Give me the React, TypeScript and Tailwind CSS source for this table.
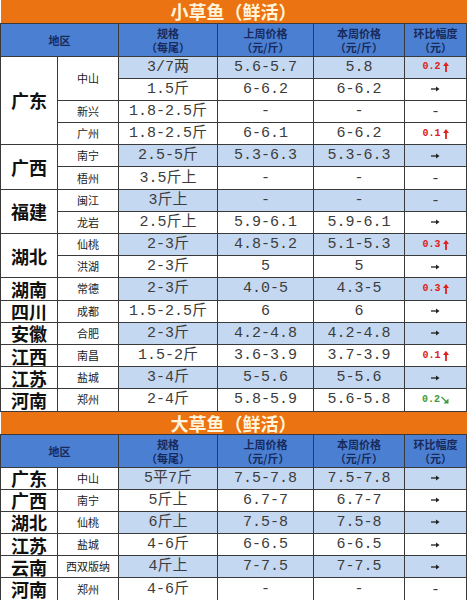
import React from 'react';

type Change = { kind: 'up' | 'down' | 'flat' | 'none'; v?: string };

type Row = {
  prov?: { name: string; span: number };
  city?: { name: string; span: number };
  spec: string;
  last: string;
  cur: string;
  chg: Change;
  blue: boolean;
};

const up = (v: string): Change => ({ kind: 'up', v });
const flat: Change = { kind: 'flat' };
const none: Change = { kind: 'none' };

const smallFish: Row[] = [
  { prov: { name: '广东', span: 4 }, city: { name: '中山', span: 2 }, spec: '3/7两', last: '5.6-5.7', cur: '5.8', chg: up('0.2'), blue: true },
  { spec: '1.5斤', last: '6-6.2', cur: '6-6.2', chg: flat, blue: false },
  { city: { name: '新兴', span: 1 }, spec: '1.8-2.5斤', last: '-', cur: '-', chg: none, blue: false },
  { city: { name: '广州', span: 1 }, spec: '1.8-2.5斤', last: '6-6.1', cur: '6-6.2', chg: up('0.1'), blue: false },
  { prov: { name: '广西', span: 2 }, city: { name: '南宁', span: 1 }, spec: '2.5-5斤', last: '5.3-6.3', cur: '5.3-6.3', chg: flat, blue: true },
  { city: { name: '梧州', span: 1 }, spec: '3.5斤上', last: '-', cur: '-', chg: none, blue: false },
  { prov: { name: '福建', span: 2 }, city: { name: '闽江', span: 1 }, spec: '3斤上', last: '-', cur: '-', chg: none, blue: true },
  { city: { name: '龙岩', span: 1 }, spec: '2.5斤上', last: '5.9-6.1', cur: '5.9-6.1', chg: flat, blue: false },
  { prov: { name: '湖北', span: 2 }, city: { name: '仙桃', span: 1 }, spec: '2-3斤', last: '4.8-5.2', cur: '5.1-5.3', chg: up('0.3'), blue: true },
  { city: { name: '洪湖', span: 1 }, spec: '2-3斤', last: '5', cur: '5', chg: flat, blue: false },
  { prov: { name: '湖南', span: 1 }, city: { name: '常德', span: 1 }, spec: '2-3斤', last: '4.0-5', cur: '4.3-5', chg: up('0.3'), blue: true },
  { prov: { name: '四川', span: 1 }, city: { name: '成都', span: 1 }, spec: '1.5-2.5斤', last: '6', cur: '6', chg: flat, blue: false },
  { prov: { name: '安徽', span: 1 }, city: { name: '合肥', span: 1 }, spec: '2-3斤', last: '4.2-4.8', cur: '4.2-4.8', chg: flat, blue: true },
  { prov: { name: '江西', span: 1 }, city: { name: '南昌', span: 1 }, spec: '1.5-2斤', last: '3.6-3.9', cur: '3.7-3.9', chg: up('0.1'), blue: false },
  { prov: { name: '江苏', span: 1 }, city: { name: '盐城', span: 1 }, spec: '3-4斤', last: '5-5.6', cur: '5-5.6', chg: flat, blue: true },
  { prov: { name: '河南', span: 1 }, city: { name: '郑州', span: 1 }, spec: '2-4斤', last: '5.8-5.9', cur: '5.6-5.8', chg: { kind: 'down', v: '0.2' }, blue: false },
];

const bigFish: Row[] = [
  { prov: { name: '广东', span: 1 }, city: { name: '中山', span: 1 }, spec: '5平7斤', last: '7.5-7.8', cur: '7.5-7.8', chg: flat, blue: true },
  { prov: { name: '广西', span: 1 }, city: { name: '南宁', span: 1 }, spec: '5斤上', last: '6.7-7', cur: '6.7-7', chg: flat, blue: false },
  { prov: { name: '湖北', span: 1 }, city: { name: '仙桃', span: 1 }, spec: '6斤上', last: '7.5-8', cur: '7.5-8', chg: flat, blue: true },
  { prov: { name: '江苏', span: 1 }, city: { name: '盐城', span: 1 }, spec: '4-6斤', last: '6-6.5', cur: '6-6.5', chg: flat, blue: false },
  { prov: { name: '云南', span: 1 }, city: { name: '西双版纳', span: 1 }, spec: '4斤上', last: '7-7.5', cur: '7-7.5', chg: flat, blue: true },
  { prov: { name: '河南', span: 1 }, city: { name: '郑州', span: 1 }, spec: '4-6斤', last: '-', cur: '-', chg: none, blue: false },
];

const cell = 'border border-[#3a3a3a] p-0 text-center align-middle leading-none';
const num = "font-['Liberation_Mono','Noto_Sans_CJK_SC',monospace] text-[15px] leading-none text-[#3c3c3c]";

function ArrowRight() {
  return (
    <svg width="9" height="6" viewBox="0 0 9 6" className="block">
      <path d="M0 3h6" stroke="#222" strokeWidth="1.3" />
      <path d="M5 0.5L8.5 3L5 5.5z" fill="#222" />
    </svg>
  );
}

function ArrowUp() {
  return (
    <svg width="6" height="10" viewBox="0 0 6 10" className="ml-[2px] block">
      <path d="M3 3v7" stroke="#e0201c" strokeWidth="1.8" />
      <path d="M0 4L3 0L6 4z" fill="#e0201c" />
    </svg>
  );
}

function ArrowDown() {
  return (
    <svg width="8" height="8" viewBox="0 0 8 8" className="ml-[1px] block">
      <path d="M0.5 1L6 6.5" stroke="#3d9a3d" strokeWidth="1.3" />
      <path d="M7.5 2.5V7.5H2.5z" fill="#3d9a3d" />
    </svg>
  );
}

function ChangeCell({ chg }: { chg: Change }) {
  if (chg.kind === 'flat') {
    return (
      <div className="flex items-center justify-center">
        <ArrowRight />
      </div>
    );
  }
  if (chg.kind === 'none') return <span className={num}>-</span>;
  const color = chg.kind === 'up' ? 'text-[#e0201c]' : 'text-[#3d9a3d]';
  return (
    <div className={`flex items-center justify-center font-['Liberation_Mono',monospace] text-[10px] font-bold leading-none ${color}`}>
      {chg.v}
      {chg.kind === 'up' ? <ArrowUp /> : <ArrowDown />}
    </div>
  );
}

function Title({ text }: { text: string }) {
  return (
    <tr className="h-[23px]">
      <td colSpan={6} className="border-0 bg-[#eb7312] p-0 text-center font-['Noto_Sans_CJK_SC',sans-serif] text-[18px] font-bold leading-none text-[#fff4dc]">
        {text}
      </td>
    </tr>
  );
}

function Header() {
  const h = `border border-[#3a3a3a] p-0 text-center align-middle bg-[#4b7fd1] font-['Noto_Sans_CJK_SC',sans-serif] text-[11px] font-bold leading-[14px] text-[#182a5c]`;
  return (
    <tr className="h-[33px]">
      <td colSpan={2} className={h}>地区</td>
      <td className={h}>规格<br />（每尾）</td>
      <td className={h}>上周价格<br />（元/斤）</td>
      <td className={h}>本周价格<br />（元/斤）</td>
      <td className={h}>环比幅度<br />（元）</td>
    </tr>
  );
}

function Rows({ rows }: { rows: Row[] }) {
  return (
    <>
      {rows.map((r, i) => {
        const bg = r.blue ? 'bg-[#c5d8f1]' : 'bg-white';
        return (
          <tr key={i} className="h-[22.2px]">
            {r.prov && (
              <td rowSpan={r.prov.span} className={`${cell} bg-white font-['Noto_Sans_CJK_SC',sans-serif] text-[18px] font-bold text-[#111]`}>
                {r.prov.name}
              </td>
            )}
            {r.city && (
              <td rowSpan={r.city.span} className={`${cell} bg-white font-['Noto_Sans_CJK_SC',sans-serif] text-[11px] text-[#222]`}>
                {r.city.name}
              </td>
            )}
            <td className={`${cell} ${bg} ${num}`}>{r.spec}</td>
            <td className={`${cell} ${bg} ${num}`}>{r.last}</td>
            <td className={`${cell} ${bg} ${num}`}>{r.cur}</td>
            <td className={`${cell} ${bg}`}>
              <ChangeCell chg={r.chg} />
            </td>
          </tr>
        );
      })}
    </>
  );
}

export default function App() {
  return (
    <div className="h-[600px] w-[469px] overflow-hidden bg-white">
      <table className="w-[466px] table-fixed border-collapse">
        <colgroup>
          <col className="w-[57px]" />
          <col className="w-[61px]" />
          <col className="w-[99px]" />
          <col className="w-[96px]" />
          <col className="w-[91px]" />
          <col className="w-[62px]" />
        </colgroup>
        <tbody>
          <Title text="小草鱼（鲜活）" />
          <Header />
          <Rows rows={smallFish} />
          <Title text="大草鱼（鲜活）" />
          <Header />
          <Rows rows={bigFish} />
        </tbody>
      </table>
    </div>
  );
}
